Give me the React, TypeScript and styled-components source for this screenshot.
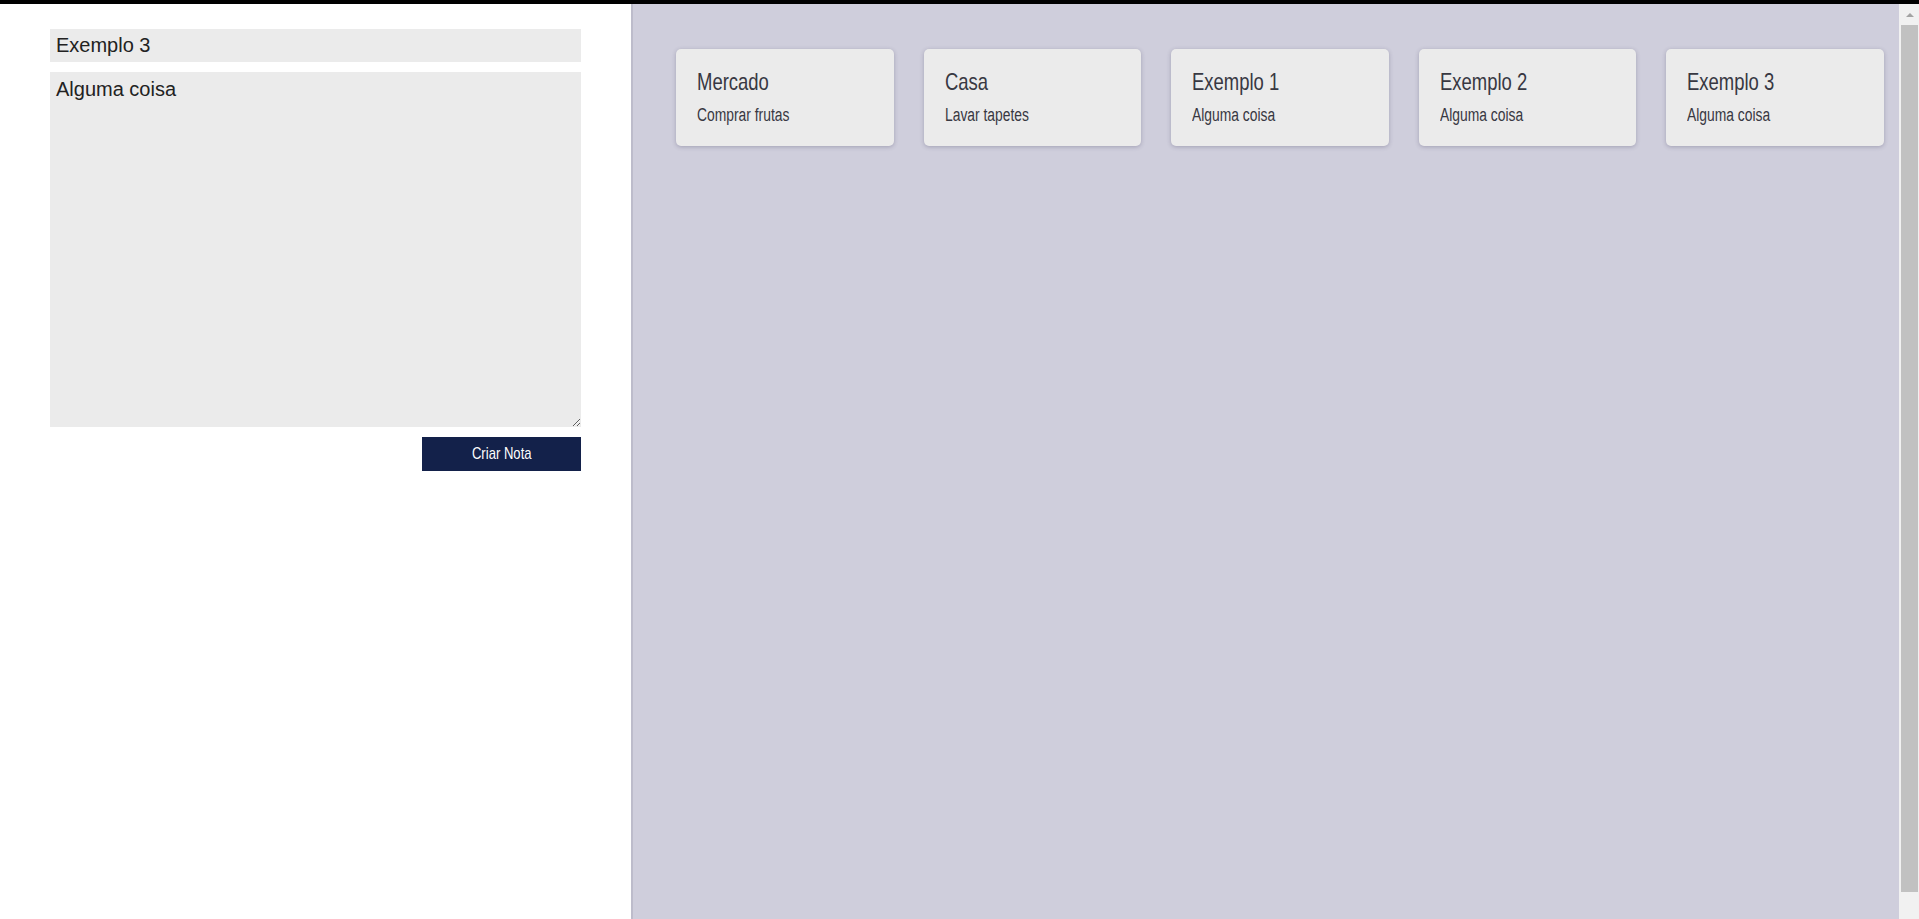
import React, { useState } from 'react';
import styled, { createGlobalStyle } from 'styled-components';

interface Note {
  id: number;
  title: string;
  body: string;
}

const initialNotes: Note[] = [
  { id: 1, title: 'Mercado', body: 'Comprar frutas' },
  { id: 2, title: 'Casa', body: 'Lavar tapetes' },
  { id: 3, title: 'Exemplo 1', body: 'Alguma coisa' },
  { id: 4, title: 'Exemplo 2', body: 'Alguma coisa' },
  { id: 5, title: 'Exemplo 3', body: 'Alguma coisa' },
];

const App = () => {
  const [notes, setNotes] = useState<Note[]>(initialNotes);
  const [title, setTitle] = useState('Exemplo 3');
  const [body, setBody] = useState('Alguma coisa');

  const handleCreate = () => {
    if (!title.trim()) return;
    setNotes([...notes, { id: Date.now(), title, body }]);
  };

  return (
    <>
      <GlobalStyle />
      <Page>
        <TopBar />
        <Main>
          <FormPanel>
            <TitleInput value={title} onChange={e => setTitle(e.target.value)} />
            <BodyInput value={body} onChange={e => setBody(e.target.value)} />
            <Actions>
              <CreateButton onClick={handleCreate}>
                <Narrow $center>Criar Nota</Narrow>
              </CreateButton>
            </Actions>
          </FormPanel>
          <NotesPanel>
            <NotesGrid>
              {notes.map(note => (
                <NoteCard key={note.id}>
                  <NoteTitle>
                    <Narrow>{note.title}</Narrow>
                  </NoteTitle>
                  <NoteBody>
                    <Narrow>{note.body}</Narrow>
                  </NoteBody>
                </NoteCard>
              ))}
            </NotesGrid>
            <ScrollTrack>
              <ScrollArrow />
              <ScrollThumb />
            </ScrollTrack>
          </NotesPanel>
        </Main>
      </Page>
    </>
  );
};

const GlobalStyle = createGlobalStyle`
  html, body {
    margin: 0;
    padding: 0;
    height: 100%;
    overflow: hidden;
  }
  body {
    font-family: "Liberation Sans", Arial, sans-serif;
    background: #fff;
  }
  * {
    box-sizing: border-box;
  }
`;

// the notes font is a thin condensed face; squeeze Liberation Sans to match
const Narrow = styled.span<{ $center?: boolean }>`
  display: inline-block;
  white-space: nowrap;
  transform: scaleX(0.77);
  transform-origin: ${props => (props.$center ? 'center' : 'left')} center;
`;

const Page = styled.div`
  display: flex;
  flex-direction: column;
  height: 100vh;
`;

const TopBar = styled.div`
  height: 4px;
  background: #000;
  flex: 0 0 auto;
`;

const Main = styled.div`
  flex: 1;
  display: flex;
  min-height: 0;
`;

const FormPanel = styled.div`
  width: 631px;
  flex: 0 0 auto;
  padding: 25px 50px;
  display: flex;
  flex-direction: column;
  gap: 10px;
`;

const TitleInput = styled.input`
  width: 531px;
  height: 33px;
  border: none;
  outline: none;
  background: #ebebeb;
  padding: 0 6px;
  font-family: "Liberation Sans", Arial, sans-serif;
  font-size: 20px;
  color: #222;
`;

const BodyInput = styled.textarea`
  display: block;
  width: 531px;
  height: 355px;
  border: none;
  outline: none;
  background: #ebebeb;
  padding: 6px;
  margin: 0;
  font-family: "Liberation Sans", Arial, sans-serif;
  font-size: 20px;
  color: #222;
`;

const Actions = styled.div`
  display: flex;
  justify-content: flex-end;
`;

const CreateButton = styled.button`
  width: 159px;
  height: 34px;
  border: none;
  padding: 0;
  background: #13214a;
  color: #fff;
  font-family: "Liberation Sans", Arial, sans-serif;
  font-size: 17px;
  cursor: pointer;
`;

const NotesPanel = styled.div`
  flex: 1;
  display: flex;
  background: #cfcedc;
  border-left: 2px solid #bdbccb;
  min-width: 0;
`;

const NotesGrid = styled.div`
  flex: 1;
  display: flex;
  flex-wrap: wrap;
  align-content: flex-start;
  align-items: flex-start;
  gap: 30px;
  padding: 45px 15px 45px 43px;
`;

const NoteCard = styled.div`
  flex: 1 1 0;
  min-width: 0;
  background: #ebebeb;
  border-radius: 5px;
  box-shadow: 0 1px 4px rgba(60, 55, 90, 0.3);
  padding: 19px 21px 20px;
  color: #383842;
`;

const NoteTitle = styled.h3`
  margin: 0 0 9px;
  font-size: 24px;
  font-weight: normal;
`;

const NoteBody = styled.p`
  margin: 0;
  font-size: 18px;
`;

const ScrollTrack = styled.div`
  width: 20px;
  flex: 0 0 auto;
  background: #f1f1f1;
  display: flex;
  flex-direction: column;
  align-items: flex-end;
  padding-right: 1px;
`;

const ScrollArrow = styled.div`
  width: 17px;
  height: 21px;
  display: flex;
  align-items: center;
  justify-content: center;

  &::before {
    content: '';
    border-left: 4px solid transparent;
    border-right: 4px solid transparent;
    border-bottom: 4px solid #a3a3a3;
  }
`;

const ScrollThumb = styled.div`
  width: 17px;
  height: 867px;
  background: #c1c1c1;
`;

export default App;
